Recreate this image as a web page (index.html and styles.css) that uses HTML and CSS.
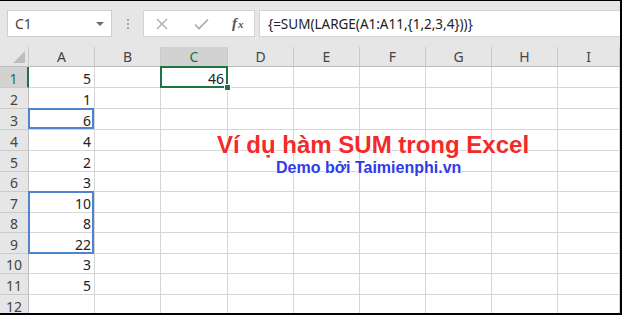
FILE: index.html
```html
<!DOCTYPE html>
<html lang="vi">
<head>
<meta charset="utf-8">
<title>Ví dụ hàm SUM trong Excel</title>
<link rel="stylesheet" href="styles.css">
</head>
<body>
<div class="frame">
  <div class="toolbar">
    <div class="namebox"><span>C1</span><span class="caret"></span></div>
    <div class="grip"><i></i><i></i><i></i></div>
    <div class="fxbox">
      <svg class="ic-x" width="12" height="12" viewBox="0 0 12 12"><path d="M1 1 11 11M11 1 1 11" stroke="#a8a8a8" stroke-width="1.3" fill="none"/></svg>
      <svg class="ic-check" width="15" height="12" viewBox="0 0 15 12"><path d="M1 6.5 5 10.5 14 1.5" stroke="#a8a8a8" stroke-width="1.6" fill="none"/></svg>
      <span class="fx"><i>f</i><small>x</small></span>
    </div>
    <div class="formula">{=SUM(LARGE(A1:A11,{1,2,3,4}))}</div>
  </div>

  <div class="sheet">
    <div class="row head">
      <div class="cell ch corner"><span class="tri"></span></div>
      <div class="cell ch">A</div><div class="cell ch">B</div><div class="cell ch sel">C</div><div class="cell ch">D</div><div class="cell ch">E</div><div class="cell ch">F</div><div class="cell ch">G</div><div class="cell ch">H</div><div class="cell ch">I</div>
    </div>
    <div class="row">
      <div class="cell rh sel">1</div>
      <div class="cell">5</div><div class="cell"></div><div class="cell active">46</div><div class="cell"></div><div class="cell"></div><div class="cell"></div><div class="cell"></div><div class="cell"></div><div class="cell"></div>
    </div>
    <div class="row">
      <div class="cell rh">2</div>
      <div class="cell">1</div><div class="cell"></div><div class="cell"></div><div class="cell"></div><div class="cell"></div><div class="cell"></div><div class="cell"></div><div class="cell"></div><div class="cell"></div>
    </div>
    <div class="row">
      <div class="cell rh">3</div>
      <div class="cell hl">6</div><div class="cell"></div><div class="cell"></div><div class="cell"></div><div class="cell"></div><div class="cell"></div><div class="cell"></div><div class="cell"></div><div class="cell"></div>
    </div>
    <div class="row">
      <div class="cell rh">4</div>
      <div class="cell">4</div><div class="cell"></div><div class="cell"></div><div class="cell"></div><div class="cell"></div><div class="cell"></div><div class="cell"></div><div class="cell"></div><div class="cell"></div>
    </div>
    <div class="row">
      <div class="cell rh">5</div>
      <div class="cell">2</div><div class="cell"></div><div class="cell"></div><div class="cell"></div><div class="cell"></div><div class="cell"></div><div class="cell"></div><div class="cell"></div><div class="cell"></div>
    </div>
    <div class="row short">
      <div class="cell rh">6</div>
      <div class="cell">3</div><div class="cell"></div><div class="cell"></div><div class="cell"></div><div class="cell"></div><div class="cell"></div><div class="cell"></div><div class="cell"></div><div class="cell"></div>
    </div>
    <div class="row">
      <div class="cell rh">7</div>
      <div class="cell hl3">10</div><div class="cell"></div><div class="cell"></div><div class="cell"></div><div class="cell"></div><div class="cell"></div><div class="cell"></div><div class="cell"></div><div class="cell"></div>
    </div>
    <div class="row short">
      <div class="cell rh">8</div>
      <div class="cell">8</div><div class="cell"></div><div class="cell"></div><div class="cell"></div><div class="cell"></div><div class="cell"></div><div class="cell"></div><div class="cell"></div><div class="cell"></div>
    </div>
    <div class="row">
      <div class="cell rh">9</div>
      <div class="cell">22</div><div class="cell"></div><div class="cell"></div><div class="cell"></div><div class="cell"></div><div class="cell"></div><div class="cell"></div><div class="cell"></div><div class="cell"></div>
    </div>
    <div class="row short">
      <div class="cell rh">10</div>
      <div class="cell">3</div><div class="cell"></div><div class="cell"></div><div class="cell"></div><div class="cell"></div><div class="cell"></div><div class="cell"></div><div class="cell"></div><div class="cell"></div>
    </div>
    <div class="row">
      <div class="cell rh">11</div>
      <div class="cell">5</div><div class="cell"></div><div class="cell"></div><div class="cell"></div><div class="cell"></div><div class="cell"></div><div class="cell"></div><div class="cell"></div><div class="cell"></div>
    </div>
    <div class="row">
      <div class="cell rh">12</div>
      <div class="cell"></div><div class="cell"></div><div class="cell"></div><div class="cell"></div><div class="cell"></div><div class="cell"></div><div class="cell"></div><div class="cell"></div><div class="cell"></div>
    </div>
  </div>

  <div class="caption">
    <div class="title">Ví dụ hàm SUM trong Excel</div>
    <div class="sub">Demo bởi Taimienphi.vn</div>
  </div>
</div>
</body>
</html>
```
FILE: styles.css
```css
body {
  margin: 0;
}

.frame {
  width: 622px;
  height: 315px;
  box-sizing: border-box;
  border-top: 1px solid #000;
  border-right: 2px solid #000;
  border-bottom: 2px solid #000;
  background: #e6e6e6;
  position: relative;
  overflow: hidden;
  font-family: "Noto Sans", "DejaVu Sans", sans-serif;
}

/* ---------- formula bar ---------- */
.toolbar {
  height: 46px;
  box-sizing: border-box;
  display: flex;
  align-items: flex-start;
  padding: 9px 0 0 7px;
}

.namebox {
  width: 105px;
  height: 27px;
  box-sizing: border-box;
  background: #fff;
  border: 1px solid #cfcfcf;
  display: flex;
  align-items: center;
  justify-content: space-between;
  padding: 0 7px 0 7px;
  font-size: 14px;
  color: #444;
}

.caret {
  width: 0;
  height: 0;
  border-left: 4px solid transparent;
  border-right: 4px solid transparent;
  border-top: 4px solid #6d6d6d;
}

.grip {
  width: 31px;
  height: 27px;
  display: flex;
  flex-direction: column;
  align-items: center;
  justify-content: center;
  gap: 2px;
}

.grip i {
  display: block;
  width: 2px;
  height: 2px;
  background: #a9a9a9;
}

.fxbox {
  width: 112px;
  height: 27px;
  box-sizing: border-box;
  background: #fff;
  border: 1px solid #d3d3d3;
  display: flex;
  align-items: center;
  padding-left: 12px;
}

.ic-check {
  margin-left: 26px;
}

.fx {
  margin-left: 23px;
  font-family: "Liberation Serif", "DejaVu Serif", serif;
  color: #555;
  display: flex;
  align-items: baseline;
}

.fx i {
  font-size: 15px;
  font-weight: bold;
}

.fx small {
  font-size: 11px;
  font-style: italic;
  font-weight: bold;
  margin-left: 1px;
}

.formula {
  flex: 1;
  height: 27px;
  box-sizing: border-box;
  margin-left: 4px;
  background: #fff;
  border: 1px solid #d3d3d3;
  border-right: none;
  display: flex;
  align-items: center;
  padding-left: 8px;
  font-size: 13.5px;
  color: #222;
}

/* ---------- grid ---------- */
.row {
  display: grid;
  grid-template-columns: 29px 66px 66px 67px 66px 66px 66px 66px 66px 62px;
  height: 21px;
}

.row.short,
.row.head {
  height: 20px;
}

.cell {
  position: relative;
  box-sizing: border-box;
  background: #fff;
  border-right: 1px solid #d6d6d6;
  border-bottom: 1px solid #d6d6d6;
  display: flex;
  align-items: flex-end;
  justify-content: flex-end;
  padding-right: 3px;
  font-size: 14px;
  line-height: 16px;
  color: #222;
}

.ch,
.rh {
  background: #e6e6e6;
  justify-content: center;
  padding-right: 0;
  color: #444;
}

.ch {
  align-items: center;
  padding-top: 1px;
  border-right-color: #c9c9c9;
  border-bottom-color: #bdbdbd;
}

.rh {
  border-right-color: #bdbdbd;
  border-bottom-color: #cbcbcb;
}

.ch.sel,
.rh.sel {
  background: #d2d2d2;
  color: #217346;
}

.rh.sel {
  border-right: 2px solid #217346;
}

.corner .tri {
  position: absolute;
  right: 3px;
  bottom: 3px;
  width: 0;
  height: 0;
  border-left: 12px solid transparent;
  border-bottom: 12px solid #bdbdbd;
}

.active::after {
  content: "";
  position: absolute;
  top: -1px;
  left: -1px;
  right: -1px;
  bottom: -1px;
  border: 2px solid #217346;
  z-index: 3;
}

.active::before {
  content: "";
  position: absolute;
  right: -3px;
  bottom: -3px;
  width: 5px;
  height: 5px;
  background: #217346;
  outline: 1px solid #fff;
  z-index: 4;
}

.hl::after,
.hl3::after {
  content: "";
  position: absolute;
  top: -1px;
  left: -1px;
  right: 0;
  bottom: 0;
  border: 2px solid #4f82d1;
  z-index: 2;
}

.hl3::after {
  bottom: auto;
  height: 63px;
  box-sizing: border-box;
}

/* ---------- overlay caption ---------- */
.caption {
  position: absolute;
  left: 217px;
  top: 130px;
  font-family: "Liberation Sans", Arial, sans-serif;
  font-weight: bold;
  z-index: 5;
}

.title {
  font-size: 24px;
  line-height: 28px;
  color: #f42a2a;
  text-shadow: 0 0 2px #fff, 0 0 2px #fff, 0 0 2px #fff;
}

.sub {
  margin-left: 59px;
  font-size: 16px;
  line-height: 18px;
  color: #2e3be6;
  text-shadow: 0 0 2px #fff, 0 0 2px #fff, 0 0 2px #fff;
}
```
